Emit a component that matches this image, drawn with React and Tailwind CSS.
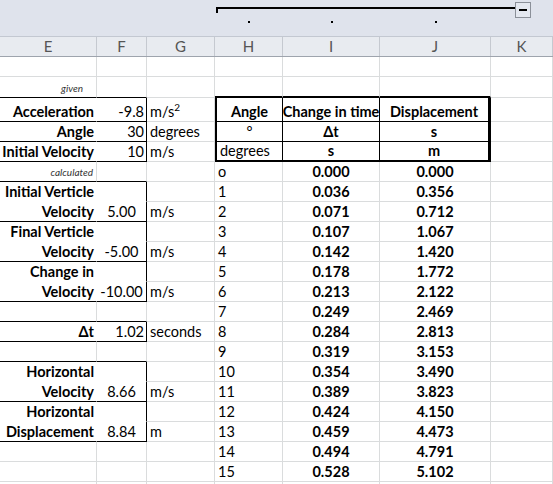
import React from 'react'

// Excel-like sheet: projectile motion worksheet (columns E..K).
const GRID = 'grid grid-cols-[97px_50px_68px_68px_97px_111px_62px]'

const RIGHT = {
  g: 'border-r border-r-[#dadcdd]',
  k: 'border-r border-r-black',
  w: 'border-r border-r-white',
  k3: 'border-r-[3px] border-r-black',
}
const BOTTOM = {
  g: 'border-b border-b-[#dadcdd]',
  k: 'border-b border-b-black',
  w: 'border-b border-b-white',
  k2: 'border-b-2 border-b-black',
}
const ALIGN = {
  l: 'justify-start pl-[3px]',
  r: 'justify-end pr-[2px]',
  c: 'justify-center',
}

function Cell({ text, a = 'l', bold, small, pad, r = 'g', b = 'g', left }) {
  return (
    <div
      className={`flex items-end overflow-visible whitespace-nowrap ${ALIGN[a]} ${RIGHT[r]} ${BOTTOM[b]} ${
        left ? 'border-l-2 border-l-black' : ''
      } ${bold ? 'font-bold' : ''} ${
        small
          ? `text-[10px] italic text-[#333] leading-[11px] pb-[3px] ${pad ?? 'pr-[3px]'}`
          : 'text-[14.5px] leading-[15px] pb-[2px]'
      }`}
    >
      {text}
    </div>
  )
}

const blank = {}

// left-hand block cells (E, F, G)
const leftRows = [
  [blank, blank, blank],
  [{ text: 'given', a: 'r', small: true, pad: 'pr-[13px]', b: 'k' }, { b: 'k' }, blank],
  [
    { text: 'Acceleration', a: 'r', bold: true, r: 'w', b: 'k' },
    { text: '-9.8', a: 'r', r: 'k', b: 'k' },
    {
      text: (
        <span>
          m/s<sup className="relative -top-[6px] text-[10px]">2</sup>
        </span>
      ),
    },
  ],
  [{ text: 'Angle', a: 'r', bold: true, r: 'w', b: 'k' }, { text: '30', a: 'r', r: 'k', b: 'k' }, { text: 'degrees' }],
  [
    { text: 'Initial Velocity', a: 'r', bold: true, r: 'w', b: 'k' },
    { text: '10', a: 'r', r: 'k', b: 'k' },
    { text: 'm/s' },
  ],
  [{ text: 'calculated', a: 'r', small: true, b: 'k' }, { b: 'k' }, blank],
  [{ text: 'Initial Verticle', a: 'r', bold: true, r: 'w', b: 'w' }, { r: 'k', b: 'w' }, blank],
  [{ text: 'Velocity', a: 'r', bold: true, r: 'w', b: 'k' }, { text: '5.00', a: 'c', r: 'k', b: 'k' }, { text: 'm/s' }],
  [{ text: 'Final Verticle', a: 'r', bold: true, r: 'w', b: 'w' }, { r: 'k', b: 'w' }, blank],
  [{ text: 'Velocity', a: 'r', bold: true, r: 'w', b: 'k' }, { text: '-5.00', a: 'c', r: 'k', b: 'k' }, { text: 'm/s' }],
  [{ text: 'Change in', a: 'r', bold: true, r: 'w', b: 'w' }, { r: 'k', b: 'w' }, blank],
  [{ text: 'Velocity', a: 'r', bold: true, r: 'w', b: 'k' }, { text: '-10.00', a: 'c', r: 'k', b: 'k' }, { text: 'm/s' }],
  [{ b: 'k' }, { b: 'k' }, blank],
  [{ text: 'Δt', a: 'r', bold: true, r: 'w', b: 'k' }, { text: '1.02', a: 'r', r: 'k', b: 'k' }, { text: 'seconds' }],
  [{ b: 'k' }, { b: 'k' }, blank],
  [{ text: 'Horizontal', a: 'r', bold: true, r: 'w', b: 'w' }, { r: 'k', b: 'w' }, blank],
  [{ text: 'Velocity', a: 'r', bold: true, r: 'w', b: 'k' }, { text: '8.66', a: 'c', r: 'k', b: 'k' }, { text: 'm/s' }],
  [{ text: 'Horizontal', a: 'r', bold: true, r: 'w', b: 'w' }, { r: 'k', b: 'w' }, blank],
  [{ text: 'Displacement', a: 'r', bold: true, r: 'w', b: 'k' }, { text: '8.84', a: 'c', r: 'k', b: 'k' }, { text: 'm' }],
  [blank, blank, blank],
  [blank, blank, blank],
  [blank, blank, blank],
]

const dt = ['0.000', '0.036', '0.071', '0.107', '0.142', '0.178', '0.213', '0.249', '0.284', '0.319', '0.354', '0.389', '0.424', '0.459', '0.494', '0.528']
const disp = ['0.000', '0.356', '0.712', '1.067', '1.420', '1.772', '2.122', '2.469', '2.813', '3.153', '3.490', '3.823', '4.150', '4.473', '4.791', '5.102']

// right-hand table cells (H, I, J)
const rightRows = [
  [blank, blank, blank],
  [{ b: 'k2' }, { b: 'k2' }, { b: 'k2' }],
  [
    { text: 'Angle', a: 'c', bold: true, left: true, r: 'k', b: 'k' },
    { text: 'Change in time', a: 'c', bold: true, r: 'k', b: 'k' },
    { text: 'Displacement', a: 'c', bold: true, r: 'k3', b: 'k' },
  ],
  [
    { text: '°', a: 'c', left: true, r: 'k', b: 'k' },
    { text: 'Δt', a: 'c', bold: true, r: 'k', b: 'k' },
    { text: 's', a: 'c', bold: true, r: 'k3', b: 'k' },
  ],
  [
    { text: 'degrees', a: 'l', left: true, r: 'k', b: 'k2' },
    { text: 's', a: 'c', bold: true, r: 'k', b: 'k2' },
    { text: 'm', a: 'c', bold: true, r: 'k3', b: 'k2' },
  ],
  ...dt.map((v, i) => [
    { text: i === 0 ? 'o' : String(i) },
    { text: v, a: 'c', bold: true },
    { text: disp[i], a: 'c', bold: true },
  ]),
  [blank, blank, blank],
]

const heights = ['h-[20px]', 'h-[21px]', 'h-[24px]']

// outline (grouping) strip above the column letters
function OutlineBar() {
  return (
    <div className="flex h-[36px] flex-col bg-[#dfe3ec]">
      <div className="flex items-start pl-[216px] pt-[2px]">
        <div className="mt-[5px] h-[6px] w-[299px] border-t-2 border-l-2 border-black" />
        <div className="flex h-[16px] w-[16px] items-center justify-center border border-[#8b9099] bg-[#e4e8f0]">
          <div className="h-[2px] w-[8px] bg-black" />
        </div>
      </div>
      <div className={`${GRID} mt-[3px]`}>
        <div />
        <div />
        <div />
        {['h', 'i', 'j'].map((k) => (
          <div key={k} className="flex justify-center">
            <div className="h-[2px] w-[2px] bg-black" />
          </div>
        ))}
      </div>
    </div>
  )
}

export default function App() {
  return (
    <div className="h-[484px] w-[553px] overflow-hidden bg-white font-['Lato','Liberation_Sans',sans-serif] text-black">
      <OutlineBar />

      {/* column letters */}
      <div className={`${GRID} h-[21px] border-t border-b border-t-[#c3c8d1] border-b-[#9ea4ad] bg-[#e8ebf0]`}>
        {['E', 'F', 'G', 'H', 'I', 'J', 'K'].map((c) => (
          <div
            key={c}
            className="flex items-center justify-center border-r border-r-[#c5c9d0] text-[15px] leading-[15px] text-[#555]"
          >
            {c}
          </div>
        ))}
      </div>

      {leftRows.map((row, i) => (
        <div key={i} className={`${GRID} ${heights[i] ?? 'h-[20px]'}`}>
          {row.map((c, j) => (
            <Cell key={'l' + j} {...c} />
          ))}
          {rightRows[i].map((c, j) => (
            <Cell key={'r' + j} {...c} />
          ))}
          <Cell />
        </div>
      ))}
    </div>
  )
}
